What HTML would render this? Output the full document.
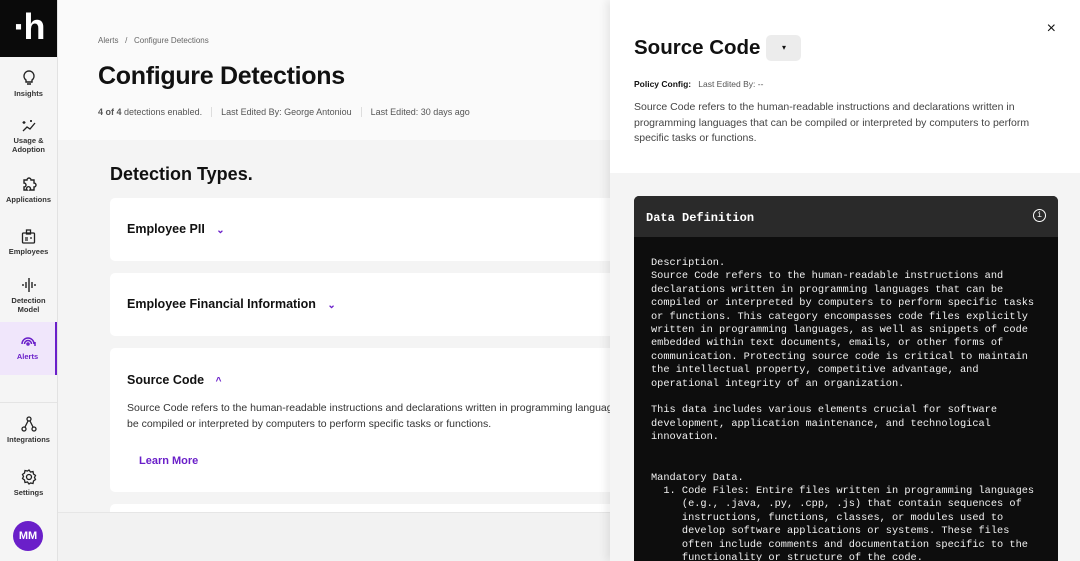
<!DOCTYPE html>
<html style="width:1080px;height:561px;overflow:hidden"><head><meta charset="utf-8"><style>
*{box-sizing:border-box;margin:0;padding:0}
body{width:1080px;height:561px;overflow:hidden;font-family:"Liberation Sans",sans-serif;background:#f4f4f4;position:relative;color:#111}
.sb{position:absolute;left:0;top:0;width:58px;height:561px;background:#f5f5f5;border-right:1px solid #e2e2e2}
.logo{height:57px;background:#0a0a0a;color:#fff;font-weight:bold;font-size:36px;text-align:center;line-height:54px;letter-spacing:-2px}
.ni{position:absolute;left:0;width:57px;text-align:center;font-size:7.5px;font-weight:bold;color:#333;line-height:8.5px}
.ni svg{display:block;margin:0 auto 4px}
.act{background:#f0e6fb;color:#6a1fc9;border-right:2px solid #6a1fc9}
.main{position:absolute;left:58px;top:0;width:552px;height:561px;overflow:hidden}
.hdr{background:#fafafa;height:140px;padding:36px 0 0 40px}
.bc{font-size:8px;color:#666}
h1{font-size:25px;margin-top:17px;letter-spacing:-.3px}
.meta{font-size:9px;color:#555;margin-top:16px}
.meta span{border-left:1px solid #ddd;padding-left:9px;margin-left:9px}
.dt{position:absolute;left:52px;top:164px;font-size:18px;font-weight:bold}
.card{position:absolute;left:52px;width:510px;background:#fff;border-radius:5px}
.card h3{font-size:12.5px;position:absolute;left:17px}
.chev{color:#6a1fc9;font-size:10px;margin-left:8px}
.foot{position:absolute;left:0;top:512px;width:552px;height:49px;background:#f2f2f2;border-top:1px solid #e6e6e6}
.pn{position:absolute;left:610px;top:0;width:470px;height:561px;background:#f4f4f4;box-shadow:-4px 0 8px rgba(0,0,0,.08);overflow:hidden}
.pt{background:#fff;height:173px;padding:35px 24px 0 24px}
.pt h2{font-size:20.5px;display:inline-block;vertical-align:middle}
.dd{display:inline-block;vertical-align:middle;width:35px;height:26px;background:#ececec;border-radius:5px;margin-left:6px;text-align:center;font-size:8px;line-height:26px}
.code{position:absolute;left:24px;top:196px;width:424px;height:380px;background:#0d0d0d;border-radius:5px;overflow:hidden}
.ch{height:41px;background:#2a2a2a;color:#fff;font-family:"Liberation Mono",monospace;font-weight:bold;font-size:12px;padding:15px 12px}
pre{font-family:"Liberation Mono",monospace;font-size:10.3px;line-height:13.4px;color:#f2f2f2;padding:20px 0 0 17px}
</style></head><body>
<div class="sb">
<div class="logo">·h</div>
<div class="ni" style="top:70px"><svg width="14" height="16" viewBox="0 0 14 16" fill="none" stroke="#222" stroke-width="1.4"><path d="M7 1a5 5 0 0 0-3 9v2h6v-2a5 5 0 0 0-3-9zM5 14h4"/></svg>Insights</div>
<div class="ni" style="top:119px"><svg width="16" height="14" viewBox="0 0 16 14" fill="none" stroke="#222" stroke-width="1.3"><path d="M2 12l4-4 3 2 5-6M3 2v3M1.5 3.5h3M10 1v2M9 2h2"/></svg>Usage &amp;<br>Adoption</div>
<div class="ni" style="top:176px"><svg width="16" height="16" viewBox="0 0 16 16" fill="none" stroke="#222" stroke-width="1.4"><path d="M3 4h3a2 2 0 1 1 4 0h3v3a2 2 0 1 1 0 4v3H9a2 2 0 1 0-3 0H3v-3a2 2 0 1 0 0-4z"/></svg>Applications</div>
<div class="ni" style="top:229px"><svg width="15" height="15" viewBox="0 0 15 15" fill="none" stroke="#222" stroke-width="1.3"><rect x="1.5" y="4" width="12" height="10" rx="1"/><rect x="5.5" y="1" width="4" height="4"/><path d="M4 9h3M4 11h3M9 9h2"/></svg>Employees</div>
<div class="ni" style="top:277px"><svg width="14" height="16" viewBox="0 0 14 16" stroke="#222" stroke-width="1.4"><path d="M1 7v2M4 5v6M7 1v14M10 5v6M13 7v2"/></svg>Detection<br>Model</div>
<div class="ni act" style="top:322px;height:53px;padding-top:13px;color:#6a1fc9"><svg width="16" height="14" viewBox="0 0 16 14" fill="none" stroke="#6a1fc9" stroke-width="1.5"><path d="M2 9a6 6 0 0 1 12 0M4.5 9a3.5 3.5 0 0 1 7 0"/><circle cx="8" cy="9" r="1"/><path d="M15 7v4"/></svg>Alerts</div>
<div style="position:absolute;top:402px;left:0;width:57px;border-top:1px solid #e4e4e4"></div>
<div class="ni" style="top:416px"><svg width="16" height="16" viewBox="0 0 16 16" fill="none" stroke="#222" stroke-width="1.3"><circle cx="8" cy="3" r="2"/><circle cx="3" cy="13" r="2"/><circle cx="13" cy="13" r="2"/><path d="M7 5l-3 6M9 5l3 6"/></svg>Integrations</div>
<div class="ni" style="top:469px"><svg width="16" height="16" viewBox="0 0 16 16" fill="none" stroke="#222" stroke-width="1.3"><circle cx="8" cy="8" r="2.5"/><path d="M8 1l1.5 2 2.5-.5.5 2.5 2 1.5-1 2 1 2-2 1.5-.5 2.5-2.5-.5L8 15l-1.5-2-2.5.5L3.5 11l-2-1.5 1-2-1-2 2-1.5.5-2.5 2.5.5z"/></svg>Settings</div>
<div style="position:absolute;top:521px;left:13px;width:30px;height:30px;border-radius:50%;background:#6a1fc9;color:#fff;font-weight:bold;font-size:11px;text-align:center;line-height:30px">MM</div>
</div>
<div class="main">
<div class="hdr"><div class="bc">Alerts &nbsp;&nbsp;/&nbsp;&nbsp; Configure Detections</div>
<h1>Configure Detections</h1>
<div class="meta"><b>4 of 4</b> detections enabled.<span>Last Edited By: George Antoniou</span><span>Last Edited: 30 days ago</span></div></div>
<div class="dt">Detection Types.</div>
<div class="card" style="top:198px;height:63px"><h3 style="top:24px">Employee PII <span class="chev">⌄</span></h3></div>
<div class="card" style="top:273px;height:63px"><h3 style="top:24px">Employee Financial Information <span class="chev">⌄</span></h3></div>
<div class="card" style="top:348px;height:144px"><h3 style="top:25px">Source Code <span class="chev">^</span></h3>
<div style="position:absolute;left:17px;top:53px;font-size:10.5px;line-height:15.5px;color:#333;white-space:nowrap;width:493px;overflow:hidden">Source Code refers to the human-readable instructions and declarations written in programming languages that can<br>be compiled or interpreted by computers to perform specific tasks or functions.</div>
<div style="position:absolute;left:29px;top:107px;font-size:11px;font-weight:bold;color:#6a1fc9">Learn More</div></div>
<div class="card" style="top:504px;height:20px"></div>
<div class="foot"></div>
</div>
<div class="pn">
<div class="pt"><div style="position:absolute;right:24px;top:20px;font-size:16px">×</div>
<h2>Source Code</h2><span class="dd">▾</span>
<div style="font-size:8.5px;margin-top:18px"><b>Policy Config:</b> &nbsp;&nbsp;<span style="color:#555">Last Edited By: --</span></div>
<div style="font-size:10.5px;line-height:15.5px;color:#444;margin-top:11px">Source Code refers to the human-readable instructions and declarations written in programming languages that can be compiled or interpreted by computers to perform specific tasks or functions.</div></div>
<div class="code"><div class="ch">Data Definition<span style="float:right;font-weight:normal;border:1.3px solid #fff;border-radius:50%;width:13px;height:13px;font-size:8px;text-align:center;line-height:11px;margin-top:-2px">i</span></div>
<pre>Description.
Source Code refers to the human-readable instructions and
declarations written in programming languages that can be
compiled or interpreted by computers to perform specific tasks
or functions. This category encompasses code files explicitly
written in programming languages, as well as snippets of code
embedded within text documents, emails, or other forms of
communication. Protecting source code is critical to maintain
the intellectual property, competitive advantage, and
operational integrity of an organization.

This data includes various elements crucial for software
development, application maintenance, and technological
innovation.


Mandatory Data.
  1. Code Files: Entire files written in programming languages
     (e.g., .java, .py, .cpp, .js) that contain sequences of
     instructions, functions, classes, or modules used to
     develop software applications or systems. These files
     often include comments and documentation specific to the
     functionality or structure of the code.</pre></div>
</div>
</body></html>
